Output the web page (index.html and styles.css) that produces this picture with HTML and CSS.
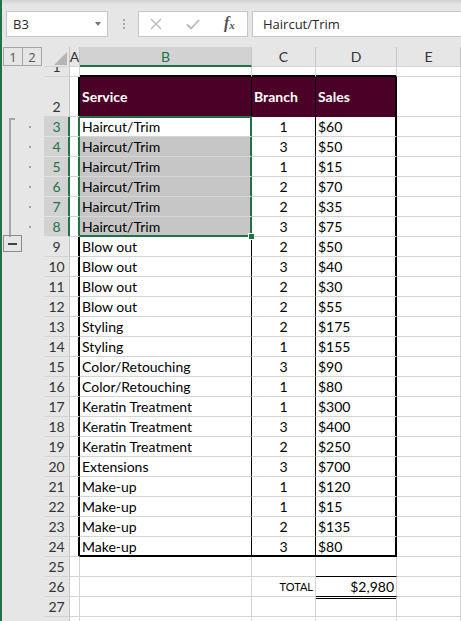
FILE: index.html
```html
<!DOCTYPE html>
<html>
<head>
<meta charset="utf-8">
<link rel="stylesheet" href="styles.css">
</head>
<body>
<div class="window">
  <div class="toolbar">
    <div class="namebox"><span>B3</span><i class="caret"></i></div>
    <div class="grip"><i></i><i></i><i></i></div>
    <div class="fxbox">
      <svg class="ico-x" width="12" height="12" viewBox="0 0 12 12"><path d="M1 1 L11 11 M11 1 L1 11" stroke="#b8b8b8" stroke-width="1.3" fill="none"/></svg>
      <svg class="ico-ok" width="14" height="11" viewBox="0 0 14 11"><path d="M1 5.5 L5 9.5 L13 1" stroke="#b8b8b8" stroke-width="1.8" fill="none"/></svg>
      <span class="fx"><span class="f">f</span><span class="x">x</span></span>
    </div>
    <div class="formula">Haircut/Trim</div>
  </div>

  <div class="sheet">
    <div class="gutter">
      <div class="lv"><span class="lb">1</span><span class="lb">2</span></div>
      <div class="gsp1"></div>
      <div class="gsp2"></div>
      <div class="group">
        <div class="bracket"></div>
        <div class="dots"><i></i><i></i><i></i><i></i><i></i><i></i></div>
      </div>
      <div class="gmin"><span class="minus"><i></i></span></div>
    </div>

    <div class="grid">
      <div class="r rh">
        <div class="hc corner"><svg width="13" height="13" viewBox="0 0 13 13"><polygon points="0,13 13,13 13,0" fill="#b5b5b5"/></svg></div>
        <div class="hc">A</div>
        <div class="hc on">B</div>
        <div class="hc">C</div>
        <div class="hc">D</div>
        <div class="hc">E</div>
      </div>

      <div class="r r1">
        <div class="n">1</div><div class="c"></div><div class="c kb"></div><div class="c kb"></div><div class="c kb"></div><div class="c"></div>
      </div>

      <div class="r r2">
        <div class="n">2</div><div class="c kl"></div>
        <div class="c hd kv gb">Service</div>
        <div class="c hd kv">Branch</div>
        <div class="c hd kl">Sales</div>
        <div class="c"></div>
      </div>

      <div class="r"><div class="n s">3</div><div class="c gl"></div><div class="c s1">Haircut/Trim</div><div class="c ctr kv">1</div><div class="c kl">$60</div><div class="c"></div></div>
      <div class="r"><div class="n s">4</div><div class="c gl"></div><div class="c s2">Haircut/Trim</div><div class="c ctr kv">3</div><div class="c kl">$50</div><div class="c"></div></div>
      <div class="r"><div class="n s">5</div><div class="c gl"></div><div class="c s2">Haircut/Trim</div><div class="c ctr kv">1</div><div class="c kl">$15</div><div class="c"></div></div>
      <div class="r"><div class="n s">6</div><div class="c gl"></div><div class="c s2">Haircut/Trim</div><div class="c ctr kv">2</div><div class="c kl">$70</div><div class="c"></div></div>
      <div class="r"><div class="n s">7</div><div class="c gl"></div><div class="c s2">Haircut/Trim</div><div class="c ctr kv">2</div><div class="c kl">$35</div><div class="c"></div></div>
      <div class="r"><div class="n s">8</div><div class="c gl"></div><div class="c s3">Haircut/Trim<i class="handle"></i></div><div class="c ctr kv">3</div><div class="c kl">$75</div><div class="c"></div></div>
      <div class="r"><div class="n">9</div><div class="c kl"></div><div class="c kv">Blow out</div><div class="c ctr kv">2</div><div class="c kl">$50</div><div class="c"></div></div>
      <div class="r"><div class="n">10</div><div class="c kl"></div><div class="c kv">Blow out</div><div class="c ctr kv">3</div><div class="c kl">$40</div><div class="c"></div></div>
      <div class="r"><div class="n">11</div><div class="c kl"></div><div class="c kv">Blow out</div><div class="c ctr kv">2</div><div class="c kl">$30</div><div class="c"></div></div>
      <div class="r"><div class="n">12</div><div class="c kl"></div><div class="c kv">Blow out</div><div class="c ctr kv">2</div><div class="c kl">$55</div><div class="c"></div></div>
      <div class="r"><div class="n">13</div><div class="c kl"></div><div class="c kv">Styling</div><div class="c ctr kv">2</div><div class="c kl">$175</div><div class="c"></div></div>
      <div class="r"><div class="n">14</div><div class="c kl"></div><div class="c kv">Styling</div><div class="c ctr kv">1</div><div class="c kl">$155</div><div class="c"></div></div>
      <div class="r"><div class="n">15</div><div class="c kl"></div><div class="c kv">Color/Retouching</div><div class="c ctr kv">3</div><div class="c kl">$90</div><div class="c"></div></div>
      <div class="r"><div class="n">16</div><div class="c kl"></div><div class="c kv">Color/Retouching</div><div class="c ctr kv">1</div><div class="c kl">$80</div><div class="c"></div></div>
      <div class="r"><div class="n">17</div><div class="c kl"></div><div class="c kv">Keratin Treatment</div><div class="c ctr kv">1</div><div class="c kl">$300</div><div class="c"></div></div>
      <div class="r"><div class="n">18</div><div class="c kl"></div><div class="c kv">Keratin Treatment</div><div class="c ctr kv">3</div><div class="c kl">$400</div><div class="c"></div></div>
      <div class="r"><div class="n">19</div><div class="c kl"></div><div class="c kv">Keratin Treatment</div><div class="c ctr kv">2</div><div class="c kl">$250</div><div class="c"></div></div>
      <div class="r"><div class="n">20</div><div class="c kl"></div><div class="c kv">Extensions</div><div class="c ctr kv">3</div><div class="c kl">$700</div><div class="c"></div></div>
      <div class="r"><div class="n">21</div><div class="c kl"></div><div class="c kv">Make-up</div><div class="c ctr kv">1</div><div class="c kl">$120</div><div class="c"></div></div>
      <div class="r"><div class="n">22</div><div class="c kl"></div><div class="c kv">Make-up</div><div class="c ctr kv">1</div><div class="c kl">$15</div><div class="c"></div></div>
      <div class="r"><div class="n">23</div><div class="c kl"></div><div class="c kv">Make-up</div><div class="c ctr kv">2</div><div class="c kl">$135</div><div class="c"></div></div>
      <div class="r"><div class="n">24</div><div class="c kl"></div><div class="c kbv">Make-up</div><div class="c ctr kbv">3</div><div class="c kbr">$80</div><div class="c"></div></div>
      <div class="r"><div class="n">25</div><div class="c"></div><div class="c"></div><div class="c"></div><div class="c ub"></div><div class="c"></div></div>
      <div class="r"><div class="n">26</div><div class="c"></div><div class="c"></div><div class="c rt small">TOTAL</div><div class="c rt ub">$2,980</div><div class="c"></div></div>
      <div class="r"><div class="n">27</div><div class="c"></div><div class="c"></div><div class="c"></div><div class="c dbl"></div><div class="c"></div></div>
      <div class="r"><div class="n">28</div><div class="c"></div><div class="c"></div><div class="c"></div><div class="c"></div><div class="c"></div></div>
    </div>
  </div>
</div>
</body>
</html>
```

FILE: styles.css
```css
html, body {
  margin: 0;
  padding: 0;
}
body {
  width: 461px;
  height: 621px;
  overflow: hidden;
  font-family: Lato, "Liberation Sans", sans-serif;
  background: #e6e6e6;
}
.window {
  width: 461px;
  height: 621px;
  box-sizing: border-box;
  border-left: 2px solid #217346;
  background: #e6e6e6;
  overflow: hidden;
}

/* ---------- toolbar ---------- */
.toolbar {
  height: 47px;
  box-sizing: border-box;
  padding: 11px 0 0 4px;
  display: flex;
  align-items: flex-start;
  background: linear-gradient(#d2d2d2, #e6e6e6 5px);
  font-family: "Open Sans", "Noto Sans", sans-serif;
  font-size: 13px;
  color: #262626;
}
.namebox {
  width: 102px;
  height: 26px;
  box-sizing: border-box;
  background: #fff;
  border: 1px solid #c6c6c6;
  display: flex;
  align-items: center;
  padding: 0 6px 0 6px;
}
.caret {
  margin-left: auto;
  width: 0;
  height: 0;
  border-left: 3.5px solid transparent;
  border-right: 3.5px solid transparent;
  border-top: 4px solid #777;
}
.grip {
  margin: 8px 0 0 15px;
  display: flex;
  flex-direction: column;
  gap: 2px;
}
.grip i {
  display: block;
  width: 2px;
  height: 2px;
  background: #a8a8a8;
}
.fxbox {
  margin-left: 13px;
  width: 110px;
  height: 26px;
  box-sizing: border-box;
  background: #fff;
  border: 1px solid #c6c6c6;
  display: flex;
  align-items: center;
  padding-left: 11px;
  gap: 24px;
}
.fx {
  font-family: "Liberation Serif", serif;
  font-style: italic;
  color: #555;
  display: flex;
  align-items: baseline;
  margin-top: -2px;
}
.fx .f {
  font-size: 16px;
  font-weight: bold;
}
.fx .x {
  font-size: 11px;
  font-weight: bold;
  position: relative;
  top: 1px;
}
.formula {
  margin-left: 4px;
  flex: 1;
  height: 26px;
  box-sizing: border-box;
  background: #fff;
  border: 1px solid #c6c6c6;
  border-right: none;
  display: flex;
  align-items: center;
  padding-left: 10px;
}

/* ---------- sheet ---------- */
.sheet {
  display: flex;
  align-items: flex-start;
}
.gutter {
  width: 42px;
  flex: none;
  display: flex;
  flex-direction: column;
}
.lv {
  height: 20px;
  display: flex;
  padding-left: 1px;
}
.lb {
  width: 20px;
  height: 19px;
  box-sizing: border-box;
  border: 1px solid #a6a6a6;
  display: flex;
  align-items: center;
  justify-content: center;
  font-size: 13px;
  color: #555;
  font-family: "Open Sans", "Noto Sans", sans-serif;
}
.lb + .lb {
  width: 19px;
  border-left: none;
}
.gsp1 { height: 10px; }
.gsp2 { height: 40px; }
.group {
  height: 120px;
  display: flex;
}
.bracket {
  margin: 1px 0 0 7px;
  width: 4px;
  border-left: 2px solid #a6a6a6;
  border-top: 2px solid #a6a6a6;
}
.dots {
  margin-left: 14px;
  display: flex;
  flex-direction: column;
}
.dots i {
  height: 20px;
  display: flex;
  align-items: center;
}
.dots i::before {
  content: "";
  width: 2px;
  height: 2px;
  background: #a0a0a0;
}
.gmin {
  height: 20px;
  padding-left: 1px;
}
.minus {
  margin-top: -2px;
  width: 19px;
  height: 17px;
  box-sizing: border-box;
  border: 1px solid #8c8c8c;
  display: flex;
  align-items: center;
  justify-content: center;
}
.minus i {
  width: 9px;
  height: 2px;
  background: #444;
}

.grid {
  width: 417px;
  flex: none;
}
.r {
  display: grid;
  grid-template-columns: 26px 10px 172px 64px 81px 64px;
  height: 20px;
}
.rh { height: 20px; }
.r1 { height: 10px; }
.r2 { height: 40px; }

.hc {
  box-sizing: border-box;
  background: #e6e6e6;
  border-right: 1px solid #c6c6c6;
  border-bottom: 1px solid #d4d4d4;
  display: flex;
  align-items: center;
  justify-content: center;
  font-size: 14px;
  color: #333;
  overflow: hidden;
}
.hc.corner {
  justify-content: flex-end;
  align-items: flex-end;
  padding: 0 2px 1px 0;
}
.hc.on {
  background: #d2d2d2;
  color: #217346;
  border-bottom: 2px solid #217346;
}

.n {
  box-sizing: border-box;
  background: #e6e6e6;
  border-right: 1px solid #c6c6c6;
  border-bottom: 1px solid #d4d4d4;
  display: flex;
  justify-content: center;
  align-items: flex-end;
  font-size: 14px;
  line-height: 18px;
  color: #333;
  overflow: hidden;
}
.n.s {
  background: #d2d2d2;
  color: #217346;
  border-right-color: #217346;
  border-bottom-color: #e2e2e2;
  box-shadow: inset -1px 0 #217346;
}

.c {
  box-sizing: border-box;
  background: #fff;
  border-right: 1px solid #d4d4d4;
  border-bottom: 1px solid #d4d4d4;
  display: flex;
  align-items: flex-end;
  padding: 0 2px 0 2px;
  font-size: 14px;
  line-height: 18px;
  color: #000;
  white-space: nowrap;
  overflow: hidden;
}
.ctr { justify-content: center; }
.rt { justify-content: flex-end; }
.small { font-size: 11px; }

/* table borders */
.kv { border-right-color: #000; }
.kl { border-right-color: #000; box-shadow: inset -1px 0 #000; }
.kb { border-bottom-color: #000; box-shadow: inset 0 -1px #000; }
.kbv { border-right-color: #000; border-bottom-color: #000; box-shadow: inset 0 -1px #000; }
.kbr { border-right-color: #000; border-bottom-color: #000; box-shadow: inset -1px 0 #000, inset 0 -1px #000; }
.ub { border-bottom-color: #000; }
.dbl { box-shadow: inset 0 1px #fff, inset 0 2px #000; }

/* header fill */
.hd {
  background: #4a0027;
  color: #fff;
  font-weight: bold;
  align-items: center;
  border-bottom-color: #4a0027;
}
.gb { border-bottom-color: #217346; }

/* selection */
.gl { border-right-color: #217346; box-shadow: inset -1px 0 #217346; }
.s1 {
  border-right-color: #217346;
  box-shadow: inset -1px 0 #217346, inset 0 1px #217346;
}
.s2 {
  background: #c6c6c6;
  border-right-color: #217346;
  box-shadow: inset -1px 0 #217346;
}
.s3 {
  background: #c6c6c6;
  border-right-color: #217346;
  border-bottom-color: #217346;
  box-shadow: inset -1px 0 #217346, inset 0 -1px #217346;
  overflow: visible;
  position: relative;
}
.handle {
  position: absolute;
  right: -4px;
  bottom: -4px;
  width: 5px;
  height: 5px;
  background: #217346;
  border: 1px solid #fff;
}
```
